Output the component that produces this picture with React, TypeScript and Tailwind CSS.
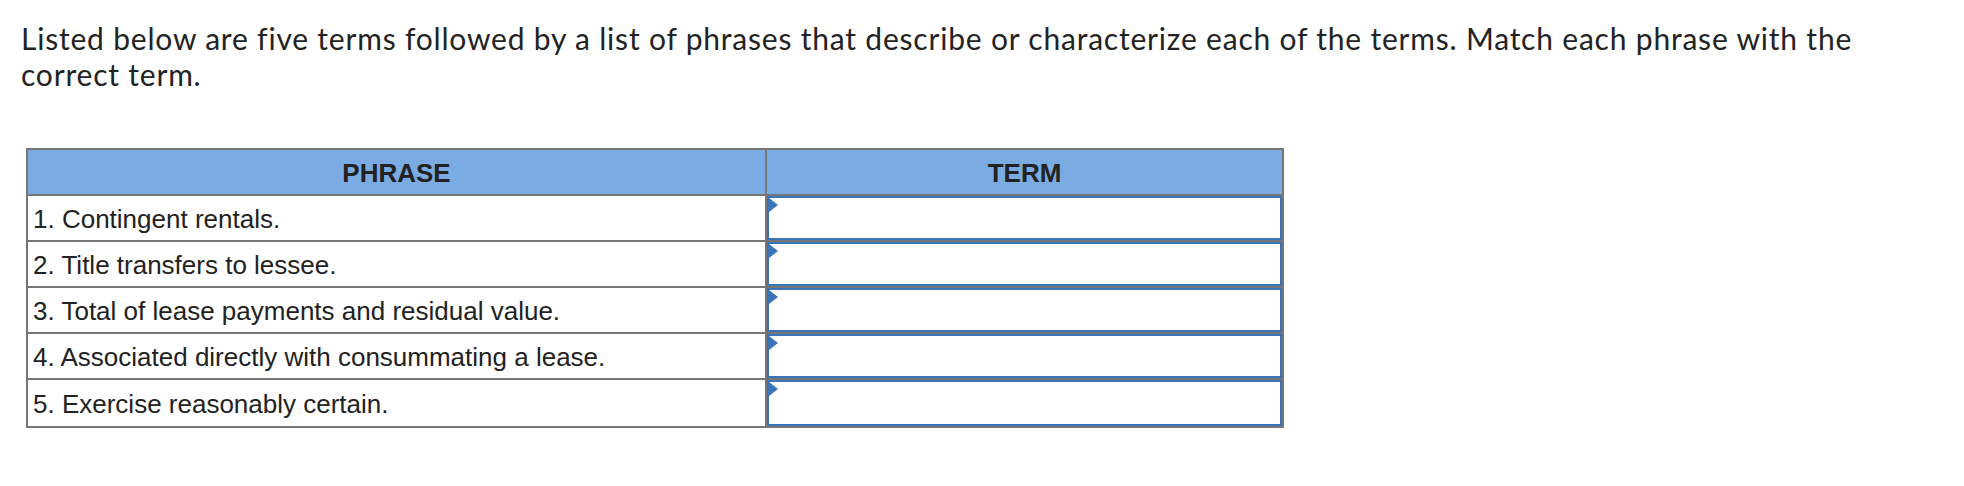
const phrases = [
  '1. Contingent rentals.',
  '2. Title transfers to lessee.',
  '3. Total of lease payments and residual value.',
  '4. Associated directly with consummating a lease.',
  '5. Exercise reasonably certain.',
];

function TermInput() {
  return (
    <div className="relative h-full border-2 border-[#3a73b8] bg-white">
      {/* dropdown marker */}
      <svg className="absolute left-0 top-0" width="10" height="14" viewBox="0 0 10 14">
        <polygon points="0,0 9,7 0,14" fill="#3a73b8" />
      </svg>
    </div>
  );
}

export default function App() {
  return (
    <div className="min-h-screen bg-white pt-[20px]">
      <p className="pl-[21px] text-[30px] leading-[36px] tracking-[0.8px] text-[#232323] font-['Lato',sans-serif]">
        Listed below are five terms followed by a list of phrases that describe or characterize each of the terms. Match each phrase with the
        <br />
        correct term.
      </p>

      <div className="ml-[26px] mt-[56px] w-[1258px] border-2 border-[#767676] font-['Liberation_Sans',Arial,sans-serif] text-[26px] text-[#222]">
        {/* Header */}
        <div className="flex h-[46px] border-b-2 border-[#767676] bg-[#7aace3] font-bold">
          <div className="flex w-[737px] items-center justify-center pt-[2px]">PHRASE</div>
          <div className="flex flex-1 items-center justify-center border-l-2 border-[#767676] pt-[2px]">TERM</div>
        </div>

        {phrases.map((p, i) => (
          <div
            key={p}
            className={`flex h-[46px] ${i < phrases.length - 1 ? 'border-b-2 border-[#767676]' : 'h-[44px]'}`}
          >
            <div className="flex w-[737px] items-center pl-[5px] pt-[2px] leading-none">{p}</div>
            <div className="flex-1 border-l-2 border-[#767676]">
              <TermInput />
            </div>
          </div>
        ))}
      </div>
    </div>
  );
}
